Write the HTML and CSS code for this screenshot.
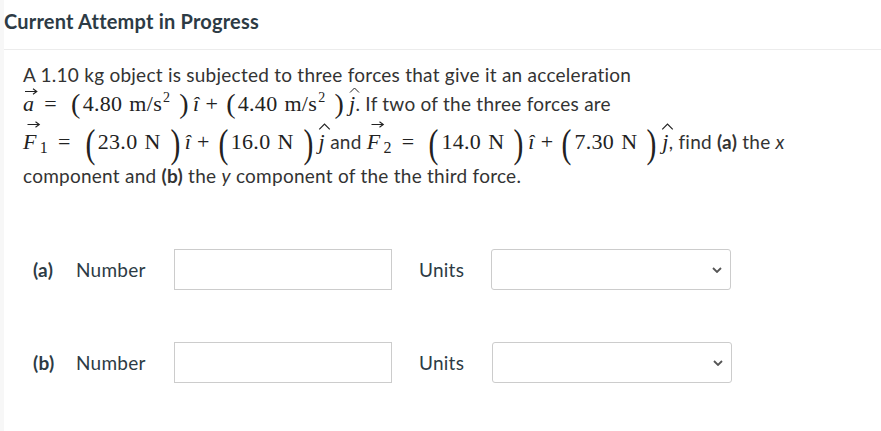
FILE: index.html
```html
<!DOCTYPE html>
<html lang="en">
<head>
<meta charset="utf-8">
<title>Current Attempt in Progress</title>
<link rel="stylesheet" href="styles.css">
</head>
<body>
<div class="page">
  <div class="strip"></div>
  <main class="content">
    <header class="head"><h1 class="title">Current Attempt in Progress</h1></header>
    <section class="question">
      <p class="text">
        <span class="line">A 1.10 kg object is subjected to three forces that give it an acceleration</span>
        <span class="line l2"><span class="math"><span class="vec"><i>a</i><svg class="arrow" viewBox="0 0 14 7"><path d="M1 3.5H12.5M9 0.8L12.8 3.5L9 6.2"/></svg></span><span class="op">=</span><span class="par">(</span>4.80<span class="sp"></span>m/s<sup>2</sup><span class="sp"></span><span class="par">)</span><i class="hat">î</i><span class="op bin">+</span><span class="par">(</span>4.40<span class="sp"></span>m/s<sup>2</sup><span class="sp"></span><span class="par">)</span><span class="jhat"><i>j</i><svg class="caret" viewBox="0 0 10 6"><path d="M0.5 5.5L5 1L9.5 5.5"/></svg></span></span>. If two of the three forces are</span>
        <span class="line l3"><span class="math"><span class="vec vf"><i>F</i><svg class="arrow" viewBox="0 0 14 7"><path d="M1 3.5H12.5M9 0.8L12.8 3.5L9 6.2"/></svg></span><span class="sub">1</span><span class="op">=</span><span class="par big">(</span>23.0<span class="sp"></span>N<span class="sp"></span><span class="par big">)</span><i class="hat">î</i><span class="op bin">+</span><span class="par big">(</span>16.0<span class="sp"></span>N<span class="sp"></span><span class="par big">)</span><span class="jhat"><i>j</i><svg class="caret wide" viewBox="0 0 10 6"><path d="M0.5 5.5L5 1L9.5 5.5"/></svg></span></span> and <span class="math"><span class="vec vf"><i>F</i><svg class="arrow" viewBox="0 0 14 7"><path d="M1 3.5H12.5M9 0.8L12.8 3.5L9 6.2"/></svg></span><span class="sub">2</span><span class="op">=</span><span class="par big">(</span>14.0<span class="sp"></span>N<span class="sp"></span><span class="par big">)</span><i class="hat">î</i><span class="op bin">+</span><span class="par big">(</span>7.30<span class="sp"></span>N<span class="sp"></span><span class="par big">)</span><span class="jhat"><i>j</i><svg class="caret wide" viewBox="0 0 10 6"><path d="M0.5 5.5L5 1L9.5 5.5"/></svg></span></span>, find <b>(a)</b> the <i>x</i></span>
        <span class="line">component and <b>(b)</b> the <i>y</i> component of the the third force.</span>
      </p>
    </section>
    <section class="answers">
      <div class="row">
        <b class="part">(a)</b>
        <span class="lbl">Number</span>
        <input class="num" type="text" aria-label="Number (a)">
        <span class="units">Units</span>
        <div class="select"><svg class="chev" viewBox="0 0 10 6"><path d="M1 1L5 5L9 1"/></svg></div>
      </div>
      <div class="row">
        <b class="part">(b)</b>
        <span class="lbl">Number</span>
        <input class="num" type="text" aria-label="Number (b)">
        <span class="units">Units</span>
        <div class="select sel-b"><svg class="chev" viewBox="0 0 10 6"><path d="M1 1L5 5L9 1"/></svg></div>
      </div>
    </section>
  </main>
</div>
</body>
</html>
```

FILE: styles.css
```css
html, body {
  margin: 0;
  padding: 0;
  background: #ffffff;
}
body {
  font-family: Lato, "Noto Sans", sans-serif;
  color: #333333;
  width: 881px;
  height: 431px;
  overflow: hidden;
}
.page {
  display: flex;
  height: 431px;
}
.strip {
  width: 4px;
  flex: none;
  background: #f7f7f7;
}
.content {
  flex: 1;
  min-width: 0;
}
.head {
  padding: 9px 0 15px 0;
  border-bottom: 1px solid #ececec;
}
.title {
  margin: 0;
  font-size: 20px;
  line-height: 25px;
  letter-spacing: 0.2px;
  font-weight: 700;
  color: #2d3b45;
}
.question {
  padding: 10px 0 0 19px;
}
.text {
  margin: 0;
  font-size: 19px;
  line-height: 29px;
  letter-spacing: 0.25px;
  color: #333;
}
.line {
  display: block;
  white-space: nowrap;
}
.l3 {
  padding: 9px 0 5px 0;
}
.text b {
  font-weight: 700;
}
.math {
  font-family: "Liberation Serif", "Times New Roman", serif;
  font-size: 22px;
  letter-spacing: 0.3px;
  color: #222;
}
.math i {
  font-style: italic;
}
.math sup {
  font-size: 14px;
  line-height: 0;
  vertical-align: 0;
  position: relative;
  top: -9px;
  margin-left: 1px;
}
.vec {
  position: relative;
  display: inline-block;
}
.arrow {
  position: absolute;
  left: 1px;
  top: -1px;
  width: 14px;
  height: 7px;
  fill: none;
  stroke: #222;
  stroke-width: 1.1;
}
.vf .arrow {
  left: 2px;
  top: -6px;
  width: 17px;
}
.sub {
  font-size: 16px;
  line-height: 0;
  position: relative;
  top: 4px;
  margin-left: 3px;
}
.op {
  margin: 0 12px 0 10px;
}
.op.bin {
  margin: 0 6px 0 6px;
}
.sp {
  display: inline-block;
  width: 7px;
}
.par {
  font-size: 28px;
  line-height: 0;
  vertical-align: -2px;
  margin: 0 2px;
}
.par.big {
  display: inline-block;
  font-size: 38px;
  vertical-align: -7px;
  transform: scale(0.78, 1.08);
  margin: 0 1px;
}
.hat {
  margin-left: 2px;
}
.jhat {
  position: relative;
  display: inline-block;
  margin-left: 3px;
}
.caret {
  position: absolute;
  left: 0px;
  top: -2px;
  width: 11px;
  height: 6px;
  fill: none;
  stroke: #222;
  stroke-width: 1;
}
.caret.wide {
  left: -1px;
  top: -4px;
  width: 13px;
  height: 7px;
}
.answers {
  padding: 59px 0 0 29px;
  display: flex;
  flex-direction: column;
  gap: 52px;
}
.row {
  display: flex;
  align-items: center;
  font-size: 19px;
  letter-spacing: 0.25px;
  height: 41px;
}
.part {
  width: 43px;
  font-weight: 700;
  color: #2d3b45;
}
.lbl {
  width: 98px;
  color: #2d3b45;
}
.num {
  box-sizing: border-box;
  width: 218px;
  height: 41px;
  margin: 0;
  border: 1px solid #cccccc;
  border-radius: 0;
  background: #fff;
  padding: 0;
}
.units {
  margin-left: 27px;
  width: 72px;
  color: #2d3b45;
}
.select {
  box-sizing: border-box;
  width: 240px;
  height: 41px;
  border: 1px solid #cccccc;
  border-radius: 3px;
  background: #fff;
  display: flex;
  align-items: center;
  justify-content: flex-end;
  padding-right: 8px;
}
.sel-b {
  margin-left: 1px;
}
.chev {
  width: 10px;
  height: 6px;
  fill: none;
  stroke: #555;
  stroke-width: 1.8;
}
```
